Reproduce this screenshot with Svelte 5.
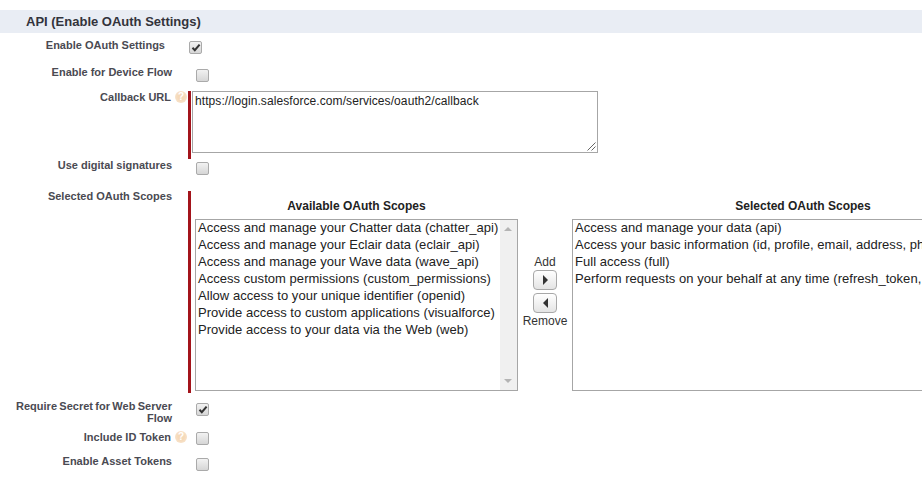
<script>
  const available = [
    'Access and manage your Chatter data (chatter_api)',
    'Access and manage your Eclair data (eclair_api)',
    'Access and manage your Wave data (wave_api)',
    'Access custom permissions (custom_permissions)',
    'Allow access to your unique identifier (openid)',
    'Provide access to custom applications (visualforce)',
    'Provide access to your data via the Web (web)'
  ];
  const selected = [
    'Access and manage your data (api)',
    'Access your basic information (id, profile, email, address, phone)',
    'Full access (full)',
    'Perform requests on your behalf at any time (refresh_token, offline_access)'
  ];
</script>

{#snippet box(checked)}
  <span class="box" class:checked>
    {#if checked}
      <svg width="10" height="9" viewBox="0 0 10 9"><path d="M1.5 4.8 L3.8 7.2 L8.6 1.6" fill="none" stroke="#333" stroke-width="2"/></svg>
    {/if}
  </span>
{/snippet}

{#snippet help()}
  <span class="help">?</span>
{/snippet}

<div class="page">
  <h2 class="section">API (Enable OAuth Settings)</h2>

  <div class="row r1">
    <div class="label">Enable OAuth Settings</div>
    <div class="data first">{@render box(true)}</div>
  </div>
  <div class="row r2">
    <div class="label">Enable for Device Flow</div>
    <div class="data">{@render box(false)}</div>
  </div>
  <div class="row r3">
    <div class="label with-help">Callback URL{@render help()}</div>
    <div class="required">
      <div class="textarea">https://login.salesforce.com/services/oauth2/callback
        <svg class="grip" width="9" height="9" viewBox="0 0 9 9"><path d="M0.5 8.5 L8.5 0.5 M4.5 8.5 L8.5 4.5" stroke="#666" stroke-width="1"/></svg>
      </div>
    </div>
  </div>
  <div class="row r4">
    <div class="label">Use digital signatures</div>
    <div class="data">{@render box(false)}</div>
  </div>
  <div class="row r5">
    <div class="label">Selected OAuth Scopes</div>
    <div class="required scopes">
      <div class="col">
        <div class="col-title">Available OAuth Scopes</div>
        <div class="list left">
          <div class="items">
            {#each available as a}<div>{a}</div>{/each}
          </div>
          <div class="scroll">
            <span class="up"></span>
            <span class="down"></span>
          </div>
        </div>
      </div>
      <div class="mover">
        <span>Add</span>
        <span class="btn"><i class="right"></i></span>
        <span class="btn last"><i class="lft"></i></span>
        <span>Remove</span>
      </div>
      <div class="col wide">
        <div class="col-title">Selected OAuth Scopes</div>
        <div class="list right-list">
          <div class="items">
            {#each selected as s}<div>{s}</div>{/each}
          </div>
        </div>
      </div>
    </div>
  </div>
  <div class="row r6">
    <div class="label">Require Secret for Web Server Flow</div>
    <div class="data">{@render box(true)}</div>
  </div>
  <div class="row r7">
    <div class="label with-help">Include ID Token{@render help()}</div>
    <div class="data">{@render box(false)}</div>
  </div>
  <div class="row r8">
    <div class="label">Enable Asset Tokens</div>
    <div class="data">{@render box(false)}</div>
  </div>
</div>

<style>
  :global(body) { margin: 0; background: #fff; overflow: hidden; }
  .page {
    width: 922px;
    height: 484px;
    overflow: hidden;
    padding-top: 10px;
    box-sizing: border-box;
    font-family: "Liberation Sans", Arial, sans-serif;
    color: #222;
  }
  .section {
    margin: 0;
    height: 23px;
    line-height: 23px;
    padding-left: 26px;
    background: #e9edf4;
    font-size: 13px;
    font-weight: bold;
    color: #33333b;
  }
  .row { display: flex; box-sizing: border-box; }
  .label {
    position: relative;
    width: 172px;
    flex: none;
    text-align: right;
    font-size: 11px;
    font-weight: bold;
    line-height: 12px;
    color: #4a4a52;
    box-sizing: border-box;
  }
  .with-help { padding-right: 1px; }
  .data { padding-left: 24px; }
  .data.first { padding-left: 17px; }
  .r1 { height: 29px; padding-top: 6px; }
  .r1 .label { padding-right: 7px; }
  .r2 { height: 29px; padding-top: 4px; }
  .r2 .data { margin-top: 1px; }
  .r3 { height: 68px; }
  .r4 { height: 32px; }
  .r4 .data { margin-top: 1px; }
  .r5 { height: 207px; }
  .r5 .label { line-height: 10px; }
  .r6 { height: 29px; padding-top: 2px; }
  .r6 .label { word-spacing: -0.7px; }
  .r6 .data { margin-top: 1px; }
  .r7 { height: 26px; padding-top: 4px; }
  .r7 .data { margin-top: -1px; }
  .r8 { height: 24px; padding-top: 2px; }
  .r8 .data { margin-top: 1px; }
  .box {
    display: flex;
    align-items: center;
    justify-content: center;
    width: 11px;
    height: 11px;
    margin-top: 2px;
    border: 1px solid #aaa;
    border-radius: 2px;
    background: linear-gradient(#f2f2f2, #d6d6d6);
  }
  .help {
    position: absolute;
    left: 175px;
    top: 0;
    width: 12px;
    height: 12px;
    border-radius: 50%;
    background: radial-gradient(circle, #f5d9b8 35%, #f9e8d6 100%);
    color: #fff;
    font-size: 10px;
    line-height: 12px;
    text-align: center;
  }
  .required {
    margin-left: 16px;
    border-left: 3px solid #a3141b;
    flex: none;
  }
  .textarea {
    position: relative;
    box-sizing: border-box;
    margin-left: 1px;
    width: 406px;
    height: 62px;
    border: 1px solid #a6a6a6;
    padding: 2px 2px;
    font-size: 12px;
    letter-spacing: 0.08px;
    line-height: 14px;
    color: #222;
    background: #fff;
  }
  .grip { position: absolute; right: 1px; bottom: 1px; }
  .scopes {
    display: flex;
    height: 202px;
    padding-left: 4px;
    box-sizing: border-box;
  }
  .col { width: 323px; flex: none; }
  .col.wide { width: 462px; }
  .col-title {
    height: 28px;
    padding-top: 8px;
    box-sizing: border-box;
    text-align: center;
    font-size: 12px;
    font-weight: bold;
    line-height: 14px;
    color: #222;
  }
  .list {
    display: flex;
    height: 172px;
    box-sizing: border-box;
    border: 1px solid #a6a6a6;
    overflow: hidden;
    background: #fff;
  }
  .items {
    flex: 1;
    padding: 0 2px;
    margin-top: -1px;
    font-size: 13px;
    line-height: 17px;
    letter-spacing: 0.04px;
    white-space: nowrap;
    color: #222;
    overflow: hidden;
  }
  .scroll {
    position: relative;
    flex: none;
    width: 17px;
    background: #f0f0f0;
  }
  .up, .down {
    position: absolute;
    left: 4px;
    width: 0;
    height: 0;
    border-left: 4px solid transparent;
    border-right: 4px solid transparent;
  }
  .up { top: 7px; border-bottom: 4px solid #b4b4b4; }
  .down { bottom: 7px; border-top: 4px solid #b4b4b4; }
  .mover {
    width: 54px;
    flex: none;
    padding-top: 64px;
    box-sizing: border-box;
    display: flex;
    flex-direction: column;
    align-items: center;
    font-size: 12px;
    line-height: 14px;
    color: #333;
  }
  .btn {
    display: flex;
    align-items: center;
    justify-content: center;
    box-sizing: border-box;
    width: 24px;
    height: 20px;
    flex: none;
    margin: 1px 0 2px;
    border: 1px solid #a8a8a8;
    border-radius: 4px;
    background: linear-gradient(#ffffff, #e4e4e4);
  }
  .btn.last { margin-bottom: 1px; }
  .btn i { width: 0; height: 0; border-top: 5px solid transparent; border-bottom: 5px solid transparent; }
  .btn .right { border-left: 5px solid #333; }
  .btn .lft { border-right: 5px solid #333; }
</style>
